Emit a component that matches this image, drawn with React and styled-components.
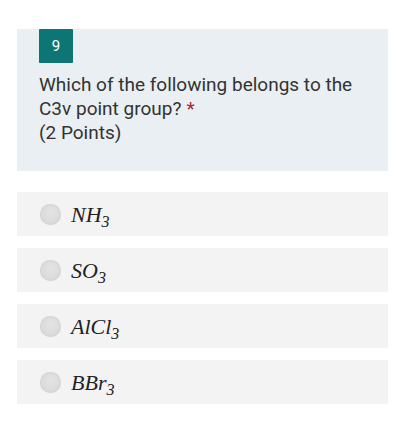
import React from "react";
import styled, { createGlobalStyle } from "styled-components";

const Global = createGlobalStyle`
  html, body { margin: 0; padding: 0; background: #ffffff; }
  body { font-family: Roboto, "Noto Sans", sans-serif; }
`;

const Page = styled.div`
  width: 405px;
  height: 435px;
  padding: 29px 17px 0 17px;
  box-sizing: border-box;
  display: flex;
  flex-direction: column;
`;

const QuestionCard = styled.div`
  background: #e9eff2;
  height: 142px;
  box-sizing: border-box;
  padding: 0 22px;
  display: flex;
  flex-direction: column;
`;

const Badge = styled.div`
  width: 34px;
  height: 34px;
  background: #0d7675;
  color: #ffffff;
  font-size: 15px;
  display: flex;
  align-items: center;
  justify-content: center;
  border-radius: 1px;
`;

const Title = styled.div`
  margin-top: 10px;
  font-size: 19px;
  line-height: 24px;
  color: #333333;
`;

const Line = styled.div`
  white-space: nowrap;
`;

const Required = styled.span`
  color: #a4262c;
  margin-left: 5px;
`;

const Options = styled.div`
  margin-top: 21px;
  display: flex;
  flex-direction: column;
  gap: 12px;
`;

const OptionRow = styled.label`
  height: 44px;
  background: #f3f3f3;
  display: flex;
  align-items: center;
  padding-left: 23px;
  gap: 10px;
`;

const Radio = styled.span`
  width: 21px;
  height: 21px;
  border-radius: 50%;
  background: radial-gradient(circle at 50% 40%, #e4e4e4 0%, #d9d9d9 70%, #d2d2d2 100%);
  box-shadow: inset 0 0 0 1px #d4d4d4;
  flex: none;
`;

const Formula = styled.span`
  font-family: "Liberation Serif", "DejaVu Serif", serif;
  font-style: italic;
  font-size: 22px;
  color: #222222;
  margin-top: 2px;
  sub {
    font-size: 16px;
    vertical-align: -5px;
    line-height: 0;
  }
`;

const options = [
  ["NH", "3"],
  ["SO", "3"],
  ["AlCl", "3"],
  ["BBr", "3"],
];

export default function App() {
  return (
    <>
      <Global />
      <Page>
        <QuestionCard>
          <Badge>9</Badge>
          <Title>
            <Line>Which of the following belongs to the</Line>
            <Line>
              <span>C3v point group?</span>
              <Required>*</Required>
            </Line>
            <Line>(2 Points)</Line>
          </Title>
        </QuestionCard>
        <Options>
          {options.map(([base, sub]) => (
            <OptionRow key={base}>
              <Radio />
              <Formula>
                {base}
                <sub>{sub}</sub>
              </Formula>
            </OptionRow>
          ))}
        </Options>
      </Page>
    </>
  );
}
